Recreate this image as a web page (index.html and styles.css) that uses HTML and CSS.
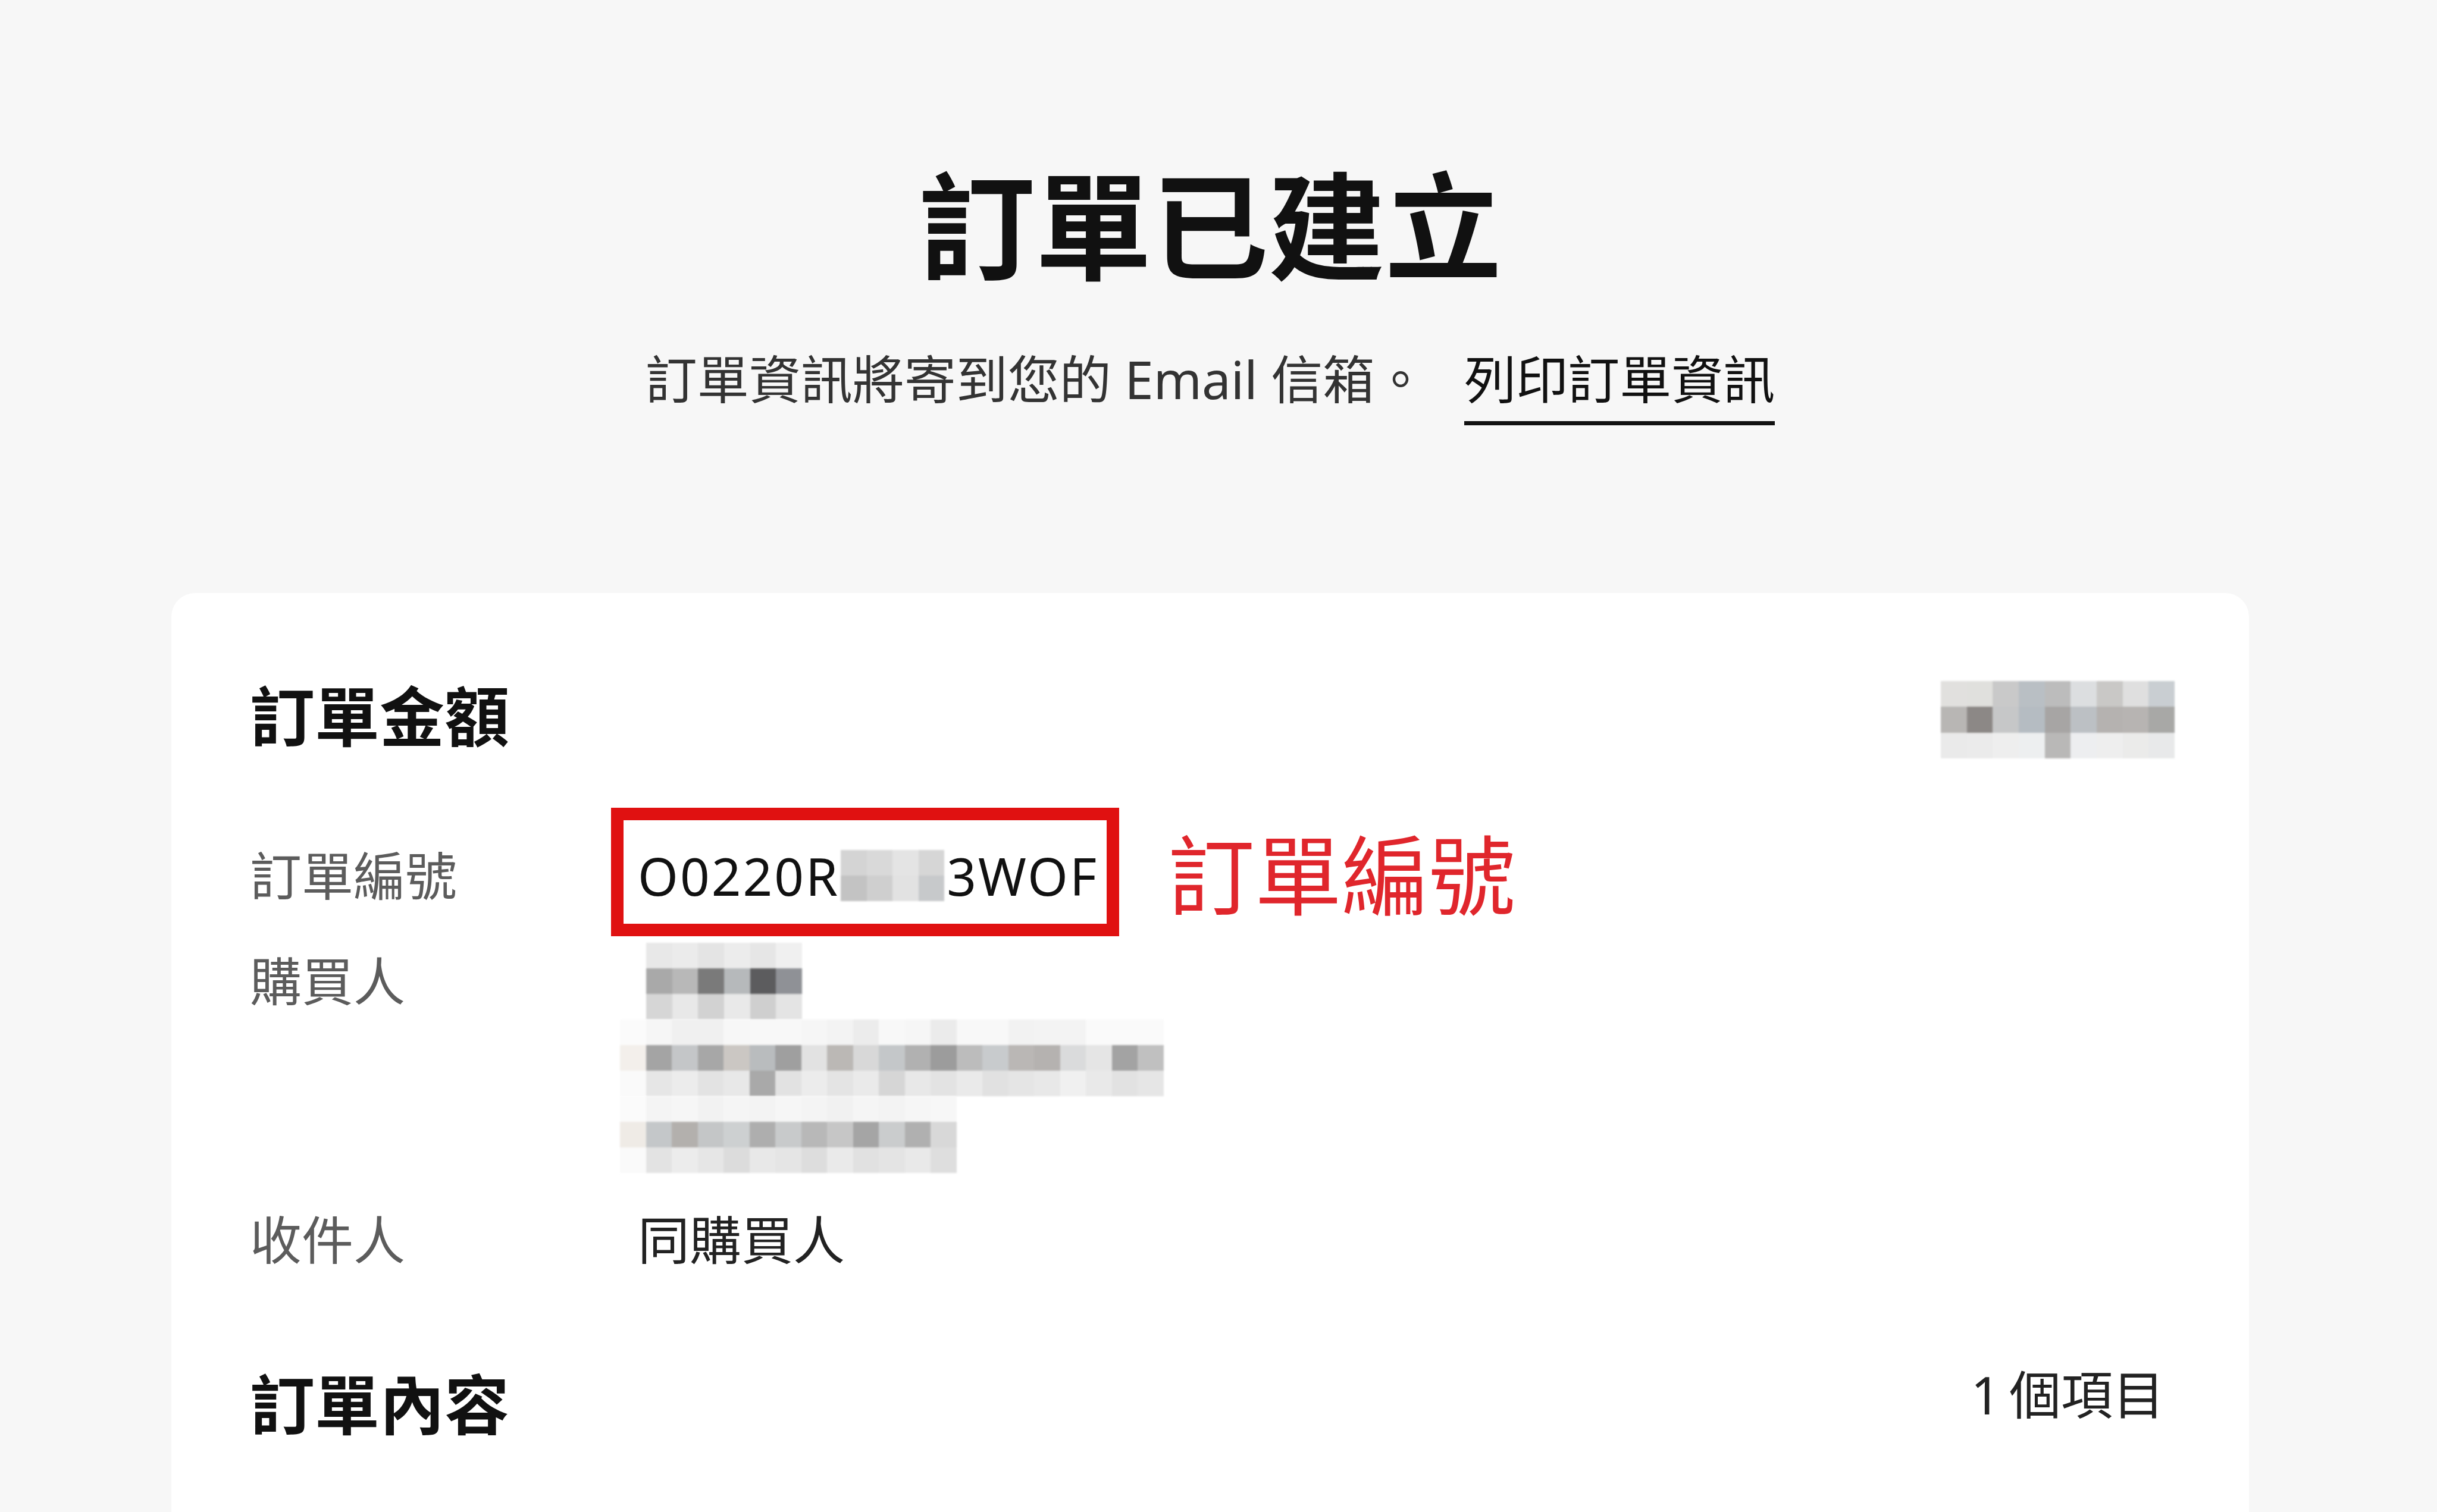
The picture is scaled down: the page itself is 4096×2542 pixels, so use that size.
FILE: index.html
```html
<!DOCTYPE html>
<html lang="zh-Hant">
<head>
<meta charset="utf-8">
<title>訂單已建立</title>
<link rel="stylesheet" href="styles.css">
</head>
<body>
<main class="page">
  <h1 class="title">訂單已建立</h1>
  <p class="notice"><span>訂單資訊將寄到您的 Email 信箱。</span><a class="print-link" href="#">列印訂單資訊</a></p>

  <section class="card">
    <div class="card-head">
      <h2 class="card-title">訂單金額</h2>
      <svg class="mosaic amount-mosaic" viewBox="0 0 9 3" preserveAspectRatio="none" shape-rendering="crispEdges" aria-hidden="true">
        <rect x="0" y="0" width="1" height="1" fill="#e1e0de"/><rect x="1" y="0" width="1" height="1" fill="#e0e0dd"/><rect x="2" y="0" width="1" height="1" fill="#c9c9c9"/><rect x="3" y="0" width="1" height="1" fill="#b9bfc4"/><rect x="4" y="0" width="1" height="1" fill="#bcbcbc"/><rect x="5" y="0" width="1" height="1" fill="#dcdee0"/><rect x="6" y="0" width="1" height="1" fill="#c9c8c6"/><rect x="7" y="0" width="1" height="1" fill="#dfdfdf"/><rect x="8" y="0" width="1" height="1" fill="#c9ced2"/>
        <rect x="0" y="1" width="1" height="1" fill="#b8b6b4"/><rect x="1" y="1" width="1" height="1" fill="#8c8886"/><rect x="2" y="1" width="1" height="1" fill="#c6c7c8"/><rect x="3" y="1" width="1" height="1" fill="#b5bcc2"/><rect x="4" y="1" width="1" height="1" fill="#a7a5a4"/><rect x="5" y="1" width="1" height="1" fill="#bcc0c4"/><rect x="6" y="1" width="1" height="1" fill="#b5b2b0"/><rect x="7" y="1" width="1" height="1" fill="#b7b4b2"/><rect x="8" y="1" width="1" height="1" fill="#a8a8a6"/>
        <rect x="0" y="2" width="1" height="1" fill="#eaeaea"/><rect x="1" y="2" width="1" height="1" fill="#ebebeb"/><rect x="2" y="2" width="1" height="1" fill="#eeeeee"/><rect x="3" y="2" width="1" height="1" fill="#edeff0"/><rect x="4" y="2" width="1" height="1" fill="#b9b8b7"/><rect x="5" y="2" width="1" height="1" fill="#edeef0"/><rect x="6" y="2" width="1" height="1" fill="#eeeeee"/><rect x="7" y="2" width="1" height="1" fill="#ebebea"/><rect x="8" y="2" width="1" height="1" fill="#e8e9ea"/>
      </svg>
    </div>

    <dl class="info">
      <div class="info-row">
        <dt class="info-label">訂單編號</dt>
        <dd class="info-value">
          <span class="order-no">O0220R<svg class="mosaic order-mosaic" viewBox="0 0 4 2" preserveAspectRatio="none" shape-rendering="crispEdges" aria-hidden="true"><rect x="0" y="0" width="1" height="1" fill="#d4d4d4"/><rect x="1" y="0" width="1" height="1" fill="#d9d9d9"/><rect x="2" y="0" width="1" height="1" fill="#e4e4e4"/><rect x="3" y="0" width="1" height="1" fill="#d6d6d6"/><rect x="0" y="1" width="1" height="1" fill="#c3c3c3"/><rect x="1" y="1" width="1" height="1" fill="#cfcfcf"/><rect x="2" y="1" width="1" height="1" fill="#e2e2e2"/><rect x="3" y="1" width="1" height="1" fill="#c7c9cb"/></svg>3WOF<span class="callout">訂單編號</span></span>
        </dd>
      </div>

      <div class="info-row">
        <dt class="info-label">購買人</dt>
        <dd class="info-value buyer">
          <svg class="mosaic buyer-name" viewBox="0 0 6 3" preserveAspectRatio="none" shape-rendering="crispEdges" aria-hidden="true">
            <rect x="0" y="0" width="1" height="1" fill="#e8e8e8"/><rect x="1" y="0" width="1" height="1" fill="#ebebeb"/><rect x="2" y="0" width="1" height="1" fill="#e4e4e4"/><rect x="3" y="0" width="1" height="1" fill="#ececec"/><rect x="4" y="0" width="1" height="1" fill="#e6e6e6"/><rect x="5" y="0" width="1" height="1" fill="#f0f0f0"/>
            <rect x="0" y="1" width="1" height="1" fill="#a9a9a9"/><rect x="1" y="1" width="1" height="1" fill="#b8b8b8"/><rect x="2" y="1" width="1" height="1" fill="#7a7a7a"/><rect x="3" y="1" width="1" height="1" fill="#b6b9bb"/><rect x="4" y="1" width="1" height="1" fill="#5c5c5e"/><rect x="5" y="1" width="1" height="1" fill="#8f9196"/>
            <rect x="0" y="2" width="1" height="1" fill="#d6d6d6"/><rect x="1" y="2" width="1" height="1" fill="#e8e8e8"/><rect x="2" y="2" width="1" height="1" fill="#d2d2d2"/><rect x="3" y="2" width="1" height="1" fill="#e9e9e9"/><rect x="4" y="2" width="1" height="1" fill="#cfcfcf"/><rect x="5" y="2" width="1" height="1" fill="#e4e4e4"/>
          </svg>
          <svg class="mosaic buyer-email" viewBox="0 0 21 3" preserveAspectRatio="none" shape-rendering="crispEdges" aria-hidden="true">
            <rect x="0" y="0" width="1" height="1" fill="#fbfbfb"/><rect x="1" y="0" width="1" height="1" fill="#f6f6f6"/><rect x="2" y="0" width="1" height="1" fill="#f0f0f0"/><rect x="3" y="0" width="1" height="1" fill="#f0f0f0"/><rect x="4" y="0" width="1" height="1" fill="#f7f7f7"/><rect x="5" y="0" width="1" height="1" fill="#f8f8f8"/><rect x="6" y="0" width="1" height="1" fill="#f8f8f8"/><rect x="7" y="0" width="1" height="1" fill="#f6f6f6"/><rect x="8" y="0" width="1" height="1" fill="#f3f3f3"/><rect x="9" y="0" width="1" height="1" fill="#ececec"/><rect x="10" y="0" width="1" height="1" fill="#f8f8f8"/><rect x="11" y="0" width="1" height="1" fill="#f6f6f6"/><rect x="12" y="0" width="1" height="1" fill="#ebebeb"/><rect x="13" y="0" width="1" height="1" fill="#f8f8f8"/><rect x="14" y="0" width="1" height="1" fill="#f8f8f8"/><rect x="15" y="0" width="1" height="1" fill="#f2f2f2"/><rect x="16" y="0" width="1" height="1" fill="#f3f3f3"/><rect x="17" y="0" width="1" height="1" fill="#f3f3f3"/><rect x="18" y="0" width="1" height="1" fill="#fafafa"/><rect x="19" y="0" width="1" height="1" fill="#fafafa"/><rect x="20" y="0" width="1" height="1" fill="#fafafa"/>
            <rect x="0" y="1" width="1" height="1" fill="#f3efeb"/><rect x="1" y="1" width="1" height="1" fill="#a4a4a4"/><rect x="2" y="1" width="1" height="1" fill="#c4c6c8"/><rect x="3" y="1" width="1" height="1" fill="#a7a7a7"/><rect x="4" y="1" width="1" height="1" fill="#cbc7c3"/><rect x="5" y="1" width="1" height="1" fill="#b9bcbe"/><rect x="6" y="1" width="1" height="1" fill="#9f9f9f"/><rect x="7" y="1" width="1" height="1" fill="#e2e2e2"/><rect x="8" y="1" width="1" height="1" fill="#bbb8b5"/><rect x="9" y="1" width="1" height="1" fill="#d8d8d8"/><rect x="10" y="1" width="1" height="1" fill="#c4c7c9"/><rect x="11" y="1" width="1" height="1" fill="#b1b1b1"/><rect x="12" y="1" width="1" height="1" fill="#9c9c9c"/><rect x="13" y="1" width="1" height="1" fill="#bcbcbc"/><rect x="14" y="1" width="1" height="1" fill="#c8cbcd"/><rect x="15" y="1" width="1" height="1" fill="#bab7b5"/><rect x="16" y="1" width="1" height="1" fill="#b5b2b0"/><rect x="17" y="1" width="1" height="1" fill="#dadbdc"/><rect x="18" y="1" width="1" height="1" fill="#e5e5e5"/><rect x="19" y="1" width="1" height="1" fill="#a3a3a3"/><rect x="20" y="1" width="1" height="1" fill="#c0c0c0"/>
            <rect x="0" y="2" width="1" height="1" fill="#fafafa"/><rect x="1" y="2" width="1" height="1" fill="#e6e6e6"/><rect x="2" y="2" width="1" height="1" fill="#ececec"/><rect x="3" y="2" width="1" height="1" fill="#e3e3e3"/><rect x="4" y="2" width="1" height="1" fill="#e8e8e8"/><rect x="5" y="2" width="1" height="1" fill="#a9a9a9"/><rect x="6" y="2" width="1" height="1" fill="#e2e2e2"/><rect x="7" y="2" width="1" height="1" fill="#ececec"/><rect x="8" y="2" width="1" height="1" fill="#e4e4e4"/><rect x="9" y="2" width="1" height="1" fill="#eaeaea"/><rect x="10" y="2" width="1" height="1" fill="#d6d6d6"/><rect x="11" y="2" width="1" height="1" fill="#e8e8e8"/><rect x="12" y="2" width="1" height="1" fill="#e3e3e3"/><rect x="13" y="2" width="1" height="1" fill="#eaeaea"/><rect x="14" y="2" width="1" height="1" fill="#e1e1e1"/><rect x="15" y="2" width="1" height="1" fill="#e5e5e5"/><rect x="16" y="2" width="1" height="1" fill="#e8e8e8"/><rect x="17" y="2" width="1" height="1" fill="#f0f0f0"/><rect x="18" y="2" width="1" height="1" fill="#e9e9e9"/><rect x="19" y="2" width="1" height="1" fill="#e2e2e2"/><rect x="20" y="2" width="1" height="1" fill="#e6e6e6"/>
          </svg>
          <svg class="mosaic buyer-phone" viewBox="0 0 13 3" preserveAspectRatio="none" shape-rendering="crispEdges" aria-hidden="true">
            <rect x="0" y="0" width="1" height="1" fill="#fbfbfb"/><rect x="1" y="0" width="1" height="1" fill="#f4f4f4"/><rect x="2" y="0" width="1" height="1" fill="#f6f6f6"/><rect x="3" y="0" width="1" height="1" fill="#f2f2f2"/><rect x="4" y="0" width="1" height="1" fill="#f5f5f5"/><rect x="5" y="0" width="1" height="1" fill="#f3f3f3"/><rect x="6" y="0" width="1" height="1" fill="#f6f6f6"/><rect x="7" y="0" width="1" height="1" fill="#f4f4f4"/><rect x="8" y="0" width="1" height="1" fill="#f1f1f1"/><rect x="9" y="0" width="1" height="1" fill="#f5f5f5"/><rect x="10" y="0" width="1" height="1" fill="#f3f3f3"/><rect x="11" y="0" width="1" height="1" fill="#f6f6f6"/><rect x="12" y="0" width="1" height="1" fill="#f7f7f7"/>
            <rect x="0" y="1" width="1" height="1" fill="#efebe6"/><rect x="1" y="1" width="1" height="1" fill="#c4c7c9"/><rect x="2" y="1" width="1" height="1" fill="#b3b0ad"/><rect x="3" y="1" width="1" height="1" fill="#c4c6c7"/><rect x="4" y="1" width="1" height="1" fill="#cdd0d1"/><rect x="5" y="1" width="1" height="1" fill="#aeaeae"/><rect x="6" y="1" width="1" height="1" fill="#c8cacb"/><rect x="7" y="1" width="1" height="1" fill="#b8b8b8"/><rect x="8" y="1" width="1" height="1" fill="#c6c6c6"/><rect x="9" y="1" width="1" height="1" fill="#a5a5a5"/><rect x="10" y="1" width="1" height="1" fill="#cacccd"/><rect x="11" y="1" width="1" height="1" fill="#b0b0b0"/><rect x="12" y="1" width="1" height="1" fill="#d8d8d8"/>
            <rect x="0" y="2" width="1" height="1" fill="#fafafa"/><rect x="1" y="2" width="1" height="1" fill="#e3e3e3"/><rect x="2" y="2" width="1" height="1" fill="#ececec"/><rect x="3" y="2" width="1" height="1" fill="#e6e6e6"/><rect x="4" y="2" width="1" height="1" fill="#dcdcdc"/><rect x="5" y="2" width="1" height="1" fill="#e8e8e8"/><rect x="6" y="2" width="1" height="1" fill="#e5e5e5"/><rect x="7" y="2" width="1" height="1" fill="#dddddd"/><rect x="8" y="2" width="1" height="1" fill="#eaeaea"/><rect x="9" y="2" width="1" height="1" fill="#e1e1e1"/><rect x="10" y="2" width="1" height="1" fill="#e4e4e4"/><rect x="11" y="2" width="1" height="1" fill="#e9e9e9"/><rect x="12" y="2" width="1" height="1" fill="#dedede"/>
          </svg>
        </dd>
      </div>

      <div class="info-row">
        <dt class="info-label">收件人</dt>
        <dd class="info-value">同購買人</dd>
      </div>
    </dl>

    <div class="card-head items-head">
      <h2 class="card-title">訂單內容</h2>
      <span class="items-count">1 個項目</span>
    </div>
  </section>
</main>
</body>
</html>
```

FILE: styles.css
```css
*,
*::before,
*::after {
  box-sizing: border-box;
}

html,
body {
  margin: 0;
  padding: 0;
  background: #f7f7f7;
  overflow: hidden;
}

body {
  font-family: "Noto Sans", "Noto Sans CJK TC", sans-serif;
  color: #222;
}

.page {
  width: 3492px;
  margin-left: 288px;
  padding-top: 281px;
}

.title {
  margin: 0;
  font-size: 196px;
  line-height: 196px;
  font-weight: 700;
  text-align: center;
  color: #111;
}

.notice {
  display: flex;
  justify-content: center;
  align-items: flex-start;
  gap: 64px;
  margin: 117px 0 0;
  font-size: 87px;
  line-height: 87px;
  color: #333;
}

.print-link {
  color: #111;
  text-decoration: none;
  padding-bottom: 27px;
  border-bottom: 7px solid #111;
}

.card {
  margin-top: 282px;
  min-height: 1700px;
  background: #fff;
  border-radius: 40px 40px 0 0;
  padding: 152px 132px 200px;
}

.card-head {
  display: flex;
  justify-content: space-between;
  align-items: flex-start;
}

.card-title {
  margin: 0;
  font-size: 109px;
  line-height: 109px;
  font-weight: 700;
  color: #111;
}

.mosaic {
  display: block;
  filter: blur(1.5px);
}

.amount-mosaic {
  width: 393px;
  height: 130px;
  margin-top: -4px;
  margin-right: -7px;
}

.info {
  margin: 133px 0 0;
  display: flex;
  flex-direction: column;
  gap: 48px;
  font-size: 87px;
  line-height: 129px;
}

.info-row {
  display: flex;
}

.info-label {
  flex: 0 0 652px;
  margin: 0;
  color: #5c5c5c;
}

.info-value {
  margin: 0;
  color: #222;
}

.order-no {
  position: relative;
  display: inline-block;
  letter-spacing: 3px;
  color: #111;
}

.order-no::before {
  content: "";
  position: absolute;
  left: -45px;
  top: -50px;
  width: 854px;
  height: 216px;
  border: 21px solid #e01111;
}

.order-mosaic {
  display: inline-block;
  width: 174px;
  height: 86px;
  margin: 0 4px 0 2px;
  vertical-align: -9px;
}

.callout {
  position: absolute;
  left: 891px;
  top: -10px;
  font-size: 146px;
  line-height: 146px;
  letter-spacing: 0;
  white-space: nowrap;
  color: #e0262c;
}

.buyer-name {
  width: 262px;
  height: 129px;
  margin-left: 14px;
}

.buyer-email {
  width: 914px;
  height: 129px;
  margin-left: -30px;
}

.buyer-phone {
  width: 566px;
  height: 129px;
  margin-left: -30px;
}

.items-head {
  margin-top: 157px;
}

.items-count {
  font-size: 87px;
  line-height: 87px;
  margin-top: -5px;
  margin-right: 10px;
  word-spacing: -8px;
  color: #222;
}
```
